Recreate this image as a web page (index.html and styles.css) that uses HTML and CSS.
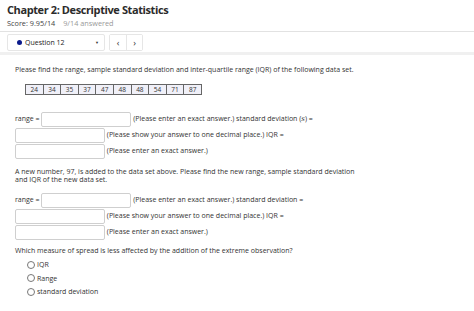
FILE: index.html
```html
<!DOCTYPE html>
<html lang="en">
<head>
    <meta charset="UTF-8">
    <title>Chapter 2: Descriptive Statistics</title>
    <link rel="stylesheet" href="styles.css">
</head>
<body>
    <div class="header">
        <h1>Chapter 2: Descriptive Statistics</h1>
        <div class="score">Score: 9.95/14 <span class="answered">9/14 answered</span></div>
    </div>

    <div class="navbar">
        <div class="q-select">
            <span class="dot"></span>
            <span class="q-name">Question 12</span>
            <span class="caret">&#9660;</span>
        </div>
        <div class="pager">
            <button class="page-btn">&lsaquo;</button>
            <button class="page-btn">&rsaquo;</button>
        </div>
    </div>

    <div class="question">
        <p class="intro">Please find the range, sample standard deviation and inter-quartile range (IQR) of the following data set.</p>

        <table class="data">
            <tr>
                <td>24</td><td>34</td><td>35</td><td>37</td><td>47</td>
                <td>48</td><td>48</td><td>54</td><td>71</td><td>87</td>
            </tr>
        </table>

        <div class="answers">
            <div class="row">range = <span class="box"></span> (Please enter an exact answer.) standard deviation (<i class="var">s</i>) =</div>
            <div class="row"><span class="box"></span> (Please show your answer to one decimal place.) IQR =</div>
            <div class="row"><span class="box"></span> (Please enter an exact answer.)</div>
        </div>

        <p class="intro second">A new number, 97, is added to the data set above. Please find the new range, sample standard deviation and IQR of the new data set.</p>

        <div class="answers next">
            <div class="row">range = <span class="box"></span> (Please enter an exact answer.) standard deviation =</div>
            <div class="row"><span class="box"></span> (Please show your answer to one decimal place.) IQR =</div>
            <div class="row"><span class="box"></span> (Please enter an exact answer.)</div>
        </div>

        <p class="intro third">Which measure of spread is less affected by the addition of the extreme observation?</p>

        <ul class="choices">
            <li><span class="radio"></span>IQR</li>
            <li><span class="radio"></span>Range</li>
            <li><span class="radio"></span>standard deviation</li>
        </ul>
    </div>
</body>
</html>
```

FILE: styles.css
```css
body {
    margin: 0;
    font-family: "Open Sans", Arial, sans-serif;
    color: #333;
    background: #fff;
}
.header {
    padding: 2px 7px 0;
}
h1 {
    margin: 0;
    font-size: 11px;
    font-weight: bold;
    letter-spacing: -0.4px;
    line-height: 16px;
    color: #2b2b2b;
}
.score {
    font-size: 7.3px;
    line-height: 10px;
    color: #444;
}
.answered {
    color: #999;
    margin-left: 6px;
}
.navbar {
    display: flex;
    align-items: center;
    gap: 4px;
    margin-top: 3px;
    padding: 1px 7px;
    border-top: 1px solid #e2e2e2;
    border-bottom: 3px solid #f0f0f0;
    height: 18px;
}
.q-select {
    display: flex;
    align-items: center;
    width: 98px;
    height: 17px;
    box-sizing: border-box;
    padding: 0 5px 0 9px;
    border: 1px solid #e6e6e6;
    border-radius: 2px;
    font-size: 7px;
    color: #222;
}
.dot {
    width: 5px;
    height: 5px;
    border-radius: 50%;
    background: #0b1a8c;
    margin-right: 3px;
}
.q-name {
    flex: 1;
}
.caret {
    font-size: 4px;
    color: #333;
}
.pager {
    display: flex;
    height: 17px;
    border: 1px solid #e6e6e6;
    border-radius: 2px;
    box-sizing: border-box;
}
.page-btn {
    width: 16px;
    border: none;
    background: #fff;
    font-family: inherit;
    font-size: 9px;
    color: #333;
    padding: 0;
}
.page-btn + .page-btn {
    border-left: 1px solid #e6e6e6;
}
.question {
    padding: 0 15px;
    max-width: 340px;
    font-size: 7px;
    color: #333;
}
.intro {
    margin: 0;
    line-height: 8px;
}
.question > .intro:first-child {
    margin-top: 11px;
}
.data {
    border-collapse: collapse;
    margin: 10px 0 0 10px;
}
.data td {
    border: 1px solid #666;
    background: #f0f0f8;
    width: 16.6px;
    height: 9px;
    padding: 0;
    text-align: center;
    font-size: 6.5px;
    line-height: 9px;
}
.answers {
    margin-top: 16px;
}
.answers.next {
    margin-top: 8px;
}
.row {
    height: 16px;
    line-height: 16px;
    white-space: nowrap;
}
.box {
    display: inline-block;
    vertical-align: middle;
    width: 90px;
    height: 15px;
    box-sizing: border-box;
    border: 1px solid #cfcfcf;
    border-radius: 2px;
    background: #fff;
}
.var {
    font-family: "DejaVu Serif", serif;
}
.intro.second {
    margin-top: 9px;
}
.intro.third {
    margin-top: 7px;
}
.choices {
    list-style: none;
    margin: 3px 0 0;
    padding: 0 0 0 12px;
}
.choices li {
    display: flex;
    align-items: center;
    height: 13.5px;
}
.radio {
    width: 6px;
    height: 6px;
    border: 1px solid #777;
    border-radius: 50%;
    margin-right: 2px;
}
```
